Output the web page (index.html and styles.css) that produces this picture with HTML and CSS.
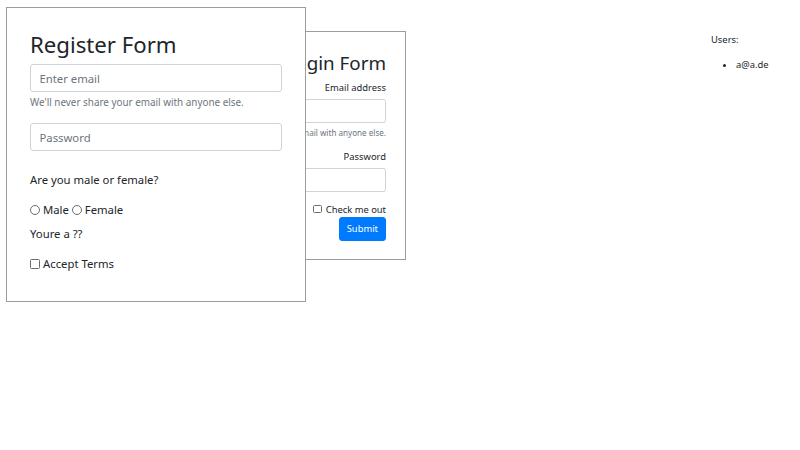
FILE: index.html
```html
<!DOCTYPE html>
<html lang="en">
<head>
<meta charset="utf-8">
<title>Forms</title>
<link rel="stylesheet" href="styles.css">
</head>
<body>
<div class="page">
  <div class="desk">
    <section class="win login">
      <h3 class="title-sm">Login Form</h3>
      <form class="form">
        <div class="group">
          <label class="lbl">Email address</label>
          <input class="ctl ctl-sm" type="email">
          <small class="hint hint-sm">We'll never share your email with anyone else.</small>
        </div>
        <div class="group">
          <label class="lbl">Password</label>
          <input class="ctl ctl-sm" type="password">
        </div>
        <div class="check-row"><input class="box box-sm" type="checkbox"><label class="check-lbl">Check me out</label></div>
        <button class="btn" type="button">Submit</button>
      </form>
    </section>
    <section class="win register">
      <h2 class="title">Register Form</h2>
      <form class="form">
        <div class="group-lg">
          <input class="ctl" type="email" placeholder="Enter email">
          <small class="hint">We'll never share your email with anyone else.</small>
        </div>
        <input class="ctl" type="password" placeholder="Password">
        <p class="question">Are you male or female?</p>
        <div class="radios"><input class="radio" type="radio" name="g"><span class="opt">Male</span> <input class="radio" type="radio" name="g"><span class="opt">Female</span></div>
        <p class="answer">Youre a ??</p>
        <div class="terms"><input class="box" type="checkbox"><span class="opt">Accept Terms</span></div>
      </form>
    </section>
  </div>
  <aside class="users">
    <p class="users-title">Users:</p>
    <ul class="users-list">
      <li>a@a.de</li>
    </ul>
  </aside>
</div>
</body>
</html>
```
FILE: styles.css
```css
body {
  margin: 0;
  font-family: "Noto Sans", "Open Sans", sans-serif;
  color: #212529;
  background: #fff;
}

.page {
  display: flex;
  justify-content: space-between;
  align-items: flex-start;
}

.desk {
  position: relative;
  width: 406px;
  height: 302px;
}

.win {
  position: absolute;
  box-sizing: border-box;
  background: #fff;
  border: 1px solid #9c9c9c;
}

/* login window (behind) */
.login {
  left: 156px;
  top: 31px;
  width: 250px;
  height: 229px;
  padding: 19px 19px 0;
  text-align: right;
  font-size: 9.4px;
  line-height: 15px;
}

.title-sm {
  margin: 0 0 5px;
  font-size: 18.8px;
  line-height: 24px;
  font-weight: 400;
}

.form {
  margin: 0;
}

.group {
  margin-bottom: 10px;
}

.lbl {
  display: block;
  margin-bottom: 4px;
}

.ctl {
  display: block;
  box-sizing: border-box;
  width: 100%;
  height: 28px;
  margin: 0;
  padding: 0 8.5px;
  font: inherit;
  color: #495057;
  background: #fff;
  border: 1px solid #ced4da;
  border-radius: 3px;
}

.ctl::placeholder {
  color: #6c757d;
}

.ctl-sm {
  height: 24px;
  border-radius: 2.5px;
}

.hint {
  display: block;
  margin-top: 3px;
  font-size: 9.9px;
  line-height: 15.75px;
  color: #6c757d;
}

.hint-sm {
  margin-top: 2.5px;
  font-size: 8.1px;
  line-height: 13px;
}

.check-row {
  display: flex;
  justify-content: flex-end;
  align-items: center;
  height: 15px;
}

.check-lbl {
  margin-left: 4px;
}

.box {
  appearance: none;
  -webkit-appearance: none;
  box-sizing: border-box;
  width: 10px;
  height: 10px;
  margin: 0 3px 0 0;
  border: 1px solid #6d6d6d;
  border-radius: 1.5px;
  background: #fff;
  vertical-align: -1px;
}

.box-sm {
  width: 8.5px;
  height: 8.5px;
  margin: 0;
}

.btn {
  display: inline-block;
  box-sizing: border-box;
  height: 24px;
  padding: 0 7px;
  font: inherit;
  color: #fff;
  background: #007bff;
  border: 1px solid #007bff;
  border-radius: 3px;
}

/* register window (front) */
.register {
  left: 6px;
  top: 7px;
  width: 300px;
  height: 295px;
  padding: 23px 23px 0;
  font-size: 11.3px;
  line-height: 18px;
}

.title {
  margin: 0 0 4.5px;
  font-size: 22.2px;
  line-height: 28.8px;
  font-weight: 400;
}

.group-lg {
  margin-bottom: 12px;
}

.question {
  margin: 20px 0 12px;
}

.radios {
  margin: 0 0 6px;
}

.radio {
  appearance: none;
  -webkit-appearance: none;
  box-sizing: border-box;
  width: 10px;
  height: 10px;
  margin: 0 3px 0 0;
  border: 1px solid #6d6d6d;
  border-radius: 50%;
  background: #fff;
  vertical-align: -1px;
}

.answer {
  margin: 0 0 12px;
}

.terms {
  margin: 0;
}

/* users aside */
.users {
  width: 89px;
  margin-top: 31.5px;
  font-size: 9.4px;
  line-height: 15px;
}

.users-title {
  margin: 0 0 10px;
}

.users-list {
  margin: 0;
  padding-left: 25px;
}
```
